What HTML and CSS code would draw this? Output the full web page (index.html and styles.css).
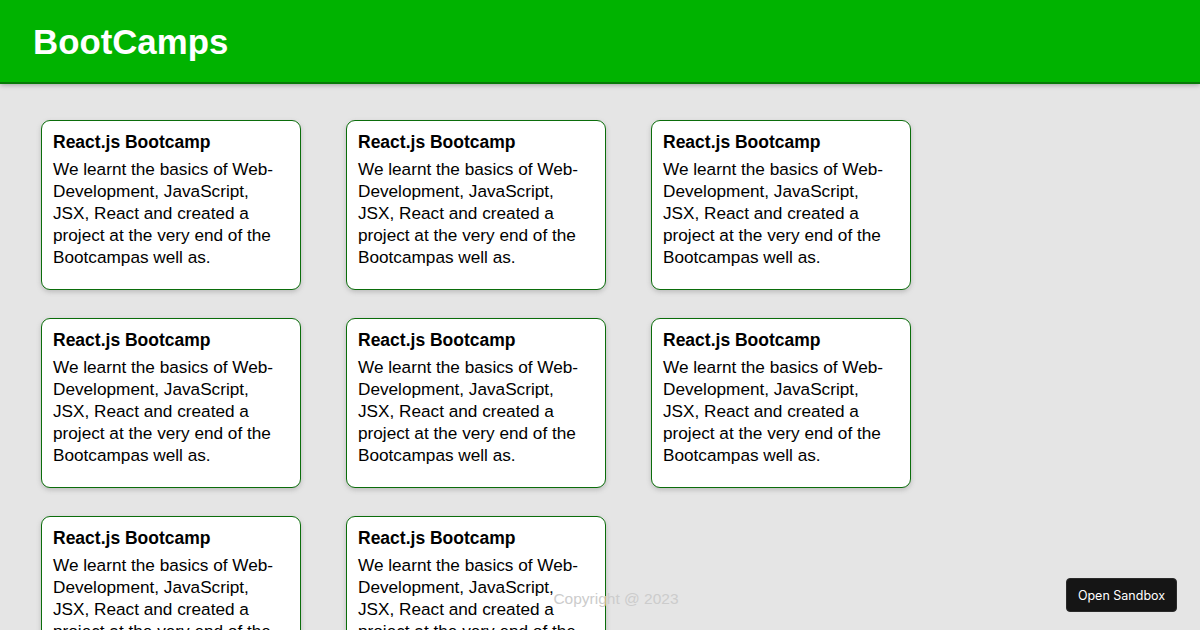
FILE: index.html
```html
<!DOCTYPE html>
<html>
<head>
<meta charset="utf-8">
<link rel="stylesheet" href="styles.css">
</head>
<body>
<header class="header"><h1 class="brand">BootCamps</h1></header>
<main class="notes">
  <div class="note"><h2 class="note-title">React.js Bootcamp</h2><p class="note-text">We learnt the basics of Web-Development, JavaScript, JSX, React and created a project at the very end of the Bootcampas well as.</p></div>
  <div class="note"><h2 class="note-title">React.js Bootcamp</h2><p class="note-text">We learnt the basics of Web-Development, JavaScript, JSX, React and created a project at the very end of the Bootcampas well as.</p></div>
  <div class="note"><h2 class="note-title">React.js Bootcamp</h2><p class="note-text">We learnt the basics of Web-Development, JavaScript, JSX, React and created a project at the very end of the Bootcampas well as.</p></div>
  <div class="note"><h2 class="note-title">React.js Bootcamp</h2><p class="note-text">We learnt the basics of Web-Development, JavaScript, JSX, React and created a project at the very end of the Bootcampas well as.</p></div>
  <div class="note"><h2 class="note-title">React.js Bootcamp</h2><p class="note-text">We learnt the basics of Web-Development, JavaScript, JSX, React and created a project at the very end of the Bootcampas well as.</p></div>
  <div class="note"><h2 class="note-title">React.js Bootcamp</h2><p class="note-text">We learnt the basics of Web-Development, JavaScript, JSX, React and created a project at the very end of the Bootcampas well as.</p></div>
  <div class="note"><h2 class="note-title">React.js Bootcamp</h2><p class="note-text">We learnt the basics of Web-Development, JavaScript, JSX, React and created a project at the very end of the Bootcampas well as.</p></div>
  <div class="note"><h2 class="note-title">React.js Bootcamp</h2><p class="note-text">We learnt the basics of Web-Development, JavaScript, JSX, React and created a project at the very end of the Bootcampas well as.</p></div>
</main>
<footer class="footer"><p class="copyright">Copyright @ 2023</p></footer>
<a class="sandbox-btn">Open Sandbox</a>
</body>
</html>
```
FILE: styles.css
```css
html, body {
  margin: 0;
  padding: 0;
  height: 630px;
  overflow: hidden;
}
body {
  background: #e5e5e5;
  font-family: "Liberation Sans", Arial, sans-serif;
  position: relative;
}
.header {
  background: #00b300;
  height: 82px;
  border-bottom: 2px solid #067a06;
  box-shadow: 0 1px 5px rgba(0,0,0,0.3);
  padding: 0 33px;
  display: flex;
  align-items: center;
  box-sizing: content-box;
}
.brand {
  margin: 0;
  color: #fff;
  font-size: 34.8px;
  font-weight: bold;
  line-height: 1;
  padding-top: 2px;
}
.notes {
  display: grid;
  grid-template-columns: repeat(3, 260px);
  column-gap: 45px;
  row-gap: 28px;
  padding: 36px 41px;
}
.note {
  box-sizing: border-box;
  height: 170px;
  background: #fff;
  border: 1px solid #0b6d0b;
  border-radius: 9px;
  box-shadow: 0 2px 5px #bbb;
  padding: 11px 11px;
}
.note-title {
  margin: 0 0 6px;
  font-size: 17.5px;
  font-weight: bold;
  line-height: 20px;
  color: #000;
}
.note-text {
  margin: 0;
  font-size: 17.2px;
  line-height: 22px;
  color: #000;
}
.footer {
  position: absolute;
  left: 32px;
  right: 0;
  top: 588px;
  text-align: center;
}
.copyright {
  margin: 0;
  color: #ccc;
  font-size: 15.5px;
  line-height: 22px;
}
.sandbox-btn {
  position: fixed;
  right: 23px;
  bottom: 18px;
  background: #151515;
  color: #fff;
  font-family: Inter, "Liberation Sans", sans-serif;
  font-size: 12.5px;
  border-radius: 4px;
  height: 34px;
  width: 111px;
  display: flex;
  align-items: center;
  justify-content: center;
  box-sizing: border-box;
  border: 1px solid #2a2a2a;
}
```
